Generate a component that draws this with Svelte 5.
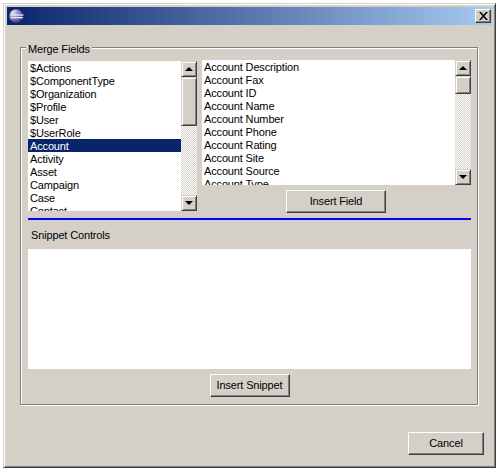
<script>
  const left = ['$Actions','$ComponentType','$Organization','$Profile','$User','$UserRole','Account','Activity','Asset','Campaign','Case','Contact'];
  const right = ['Account Description','Account Fax','Account ID','Account Name','Account Number','Account Phone','Account Rating','Account Site','Account Source','Account Type'];
</script>

<div class="window">
  <div class="titlebar">
    <svg class="logo" width="15" height="15" viewBox="0 0 15 15">
      <defs>
        <radialGradient id="g" cx="0.300" cy="0.250" r="0.850">
          <stop offset="0" stop-color="#e4e0f4"/>
          <stop offset="0.450" stop-color="#9a88c8"/>
          <stop offset="1" stop-color="#3c2c80"/>
        </radialGradient>
      </defs>
      <circle cx="7" cy="7" r="6.800" fill="url(#g)"/>
      <rect x="1.500" y="5.400" width="13" height="1.300" fill="#dce8f8"/>
      <rect x="1.500" y="8" width="12.500" height="1.300" fill="#dce8f8"/>
    </svg>
    <button class="close" aria-label="Close">
      <svg width="9" height="8" viewBox="0 0 9 8"><path d="M0 0h2l2.500 2.800L7 0h2L5.500 4 9 8H7L4.500 5.200 2 8H0l3.500-4z" fill="#000"/></svg>
    </button>
  </div>

  <div class="body">
    <div class="group">
      <span class="legend">Merge Fields</span>
      <div class="fields">
        <div class="listbox tall">
          <ul>
            {#each left as item}
              <li class:selected={item === 'Account'}>{item}</li>
            {/each}
          </ul>
          <div class="scrollbar">
            <div class="sb-btn"><span class="up"></span></div>
            <div class="thumb big"></div>
            <div class="track"></div>
            <div class="sb-btn"><span class="down"></span></div>
          </div>
        </div>
        <div class="rightcol">
          <div class="listbox short">
            <ul>
              {#each right as item}
                <li>{item}</li>
              {/each}
            </ul>
            <div class="scrollbar">
              <div class="sb-btn"><span class="up"></span></div>
              <div class="thumb"></div>
              <div class="track"></div>
              <div class="sb-btn"><span class="down"></span></div>
            </div>
          </div>
          <button class="btn field">Insert Field</button>
        </div>
      </div>
      <div class="sash"></div>
      <div class="snippet-label">Snippet Controls</div>
      <div class="snippet"></div>
      <button class="btn insert">Insert Snippet</button>
    </div>
    <div class="footer">
      <button class="btn cancel">Cancel</button>
    </div>
  </div>
</div>

<style>
  :global(body) { margin: 0; background: #fff; }
  .window {
    box-sizing: border-box;
    width: 493px;
    height: 465px;
    margin: 3px 0 0 3px;
    padding: 3px;
    background: #d4d0c8;
    border-top: 1px solid #d4d0c8;
    border-left: 1px solid #d4d0c8;
    border-right: 1px solid #404040;
    border-bottom: 1px solid #404040;
    box-shadow: inset 1px 1px 0 #fff, inset -1px -1px 0 #808080;
    font: 11px/13px "Liberation Sans", Arial, sans-serif;
    letter-spacing: -0.15px;
    color: #000;
    display: flex;
    flex-direction: column;
  }
  .titlebar {
    height: 18px;
    flex: none;
    background: linear-gradient(90deg, #0a246a, #a6caf0);
    display: flex;
    align-items: center;
    justify-content: space-between;
    padding: 0 1px 0 2px;
  }
  .close {
    box-sizing: border-box;
    width: 16px;
    height: 14px;
    padding: 0;
    background: #d4d0c8;
    border: 1px solid;
    border-color: #fff #404040 #404040 #fff;
    box-shadow: inset -1px -1px 0 #808080;
    display: flex;
    align-items: center;
    justify-content: center;
  }
  .body {
    flex: 1;
    display: flex;
    flex-direction: column;
    padding: 22px 8px 10px 13px;
  }
  .group {
    position: relative;
    box-sizing: border-box;
    width: 458px;
    height: 358px;
    flex: none;
    padding: 12px 6px 0 7px;
    border: 1px solid #808080;
    box-shadow: 1px 1px 0 #fff, inset 1px 1px 0 #fff;
    display: flex;
    flex-direction: column;
  }
  .legend {
    position: absolute;
    left: 5px;
    top: -5px;
    padding: 0 2px;
    background: #d4d0c8;
  }
  .fields {
    display: flex;
    gap: 5px;
    align-items: flex-start;
  }
  .listbox {
    display: flex;
    background: #fff;
  }
  .listbox.tall { width: 169px; height: 150px; margin-top: 1px; }
  .listbox.short { width: 269px; height: 125px; }
  ul {
    flex: 1;
    margin: 0;
    padding: 0;
    list-style: none;
    overflow: hidden;
    white-space: nowrap;
  }
  li {
    height: 13px;
    line-height: 15px;
    padding-left: 2px;
    overflow: hidden;
  }
  li.selected {
    background: #0a246a;
    color: #fff;
  }
  .scrollbar {
    width: 16px;
    flex: none;
    display: flex;
    flex-direction: column;
  }
  .track {
    flex: 1;
    background: repeating-conic-gradient(#fff 0 25%, #d4d0c8 0 50%) 0 0 / 2px 2px;
  }
  .sb-btn, .thumb {
    box-sizing: border-box;
    flex: none;
    background: #d4d0c8;
    border: 1px solid;
    border-color: #d4d0c8 #404040 #404040 #d4d0c8;
    box-shadow: inset 1px 1px 0 #fff, inset -1px -1px 0 #808080;
  }
  .sb-btn {
    height: 16px;
    display: flex;
    align-items: center;
    justify-content: center;
  }
  .thumb { height: 18px; }
  .thumb.big { height: 49px; }
  .up, .down {
    width: 0;
    height: 0;
    border-left: 4px solid transparent;
    border-right: 4px solid transparent;
  }
  .up { border-bottom: 4px solid #000; }
  .down { border-top: 4px solid #000; }
  .rightcol {
    display: flex;
    flex-direction: column;
    align-items: flex-start;
  }
  .btn {
    box-sizing: border-box;
    height: 23px;
    padding: 0;
    font: inherit;
    letter-spacing: inherit;
    color: #000;
    background: #d4d0c8;
    border: 1px solid;
    border-color: #fff #404040 #404040 #fff;
    box-shadow: inset -1px -1px 0 #808080;
  }
  .field { width: 100px; margin: 5px 0 0 84px; }
  .sash {
    height: 2px;
    background: #0000ff;
    margin-top: 5px;
    flex: none;
  }
  .snippet-label {
    margin-top: 9px;
    padding-left: 3px;
  }
  .snippet {
    flex: none;
    height: 120px;
    margin-top: 7px;
    background: #fff;
  }
  .insert { width: 80px; align-self: center; margin-top: 5px; }
  .footer {
    display: flex;
    justify-content: flex-end;
    margin-top: 27px;
  }
  .cancel { width: 76px; }
</style>
